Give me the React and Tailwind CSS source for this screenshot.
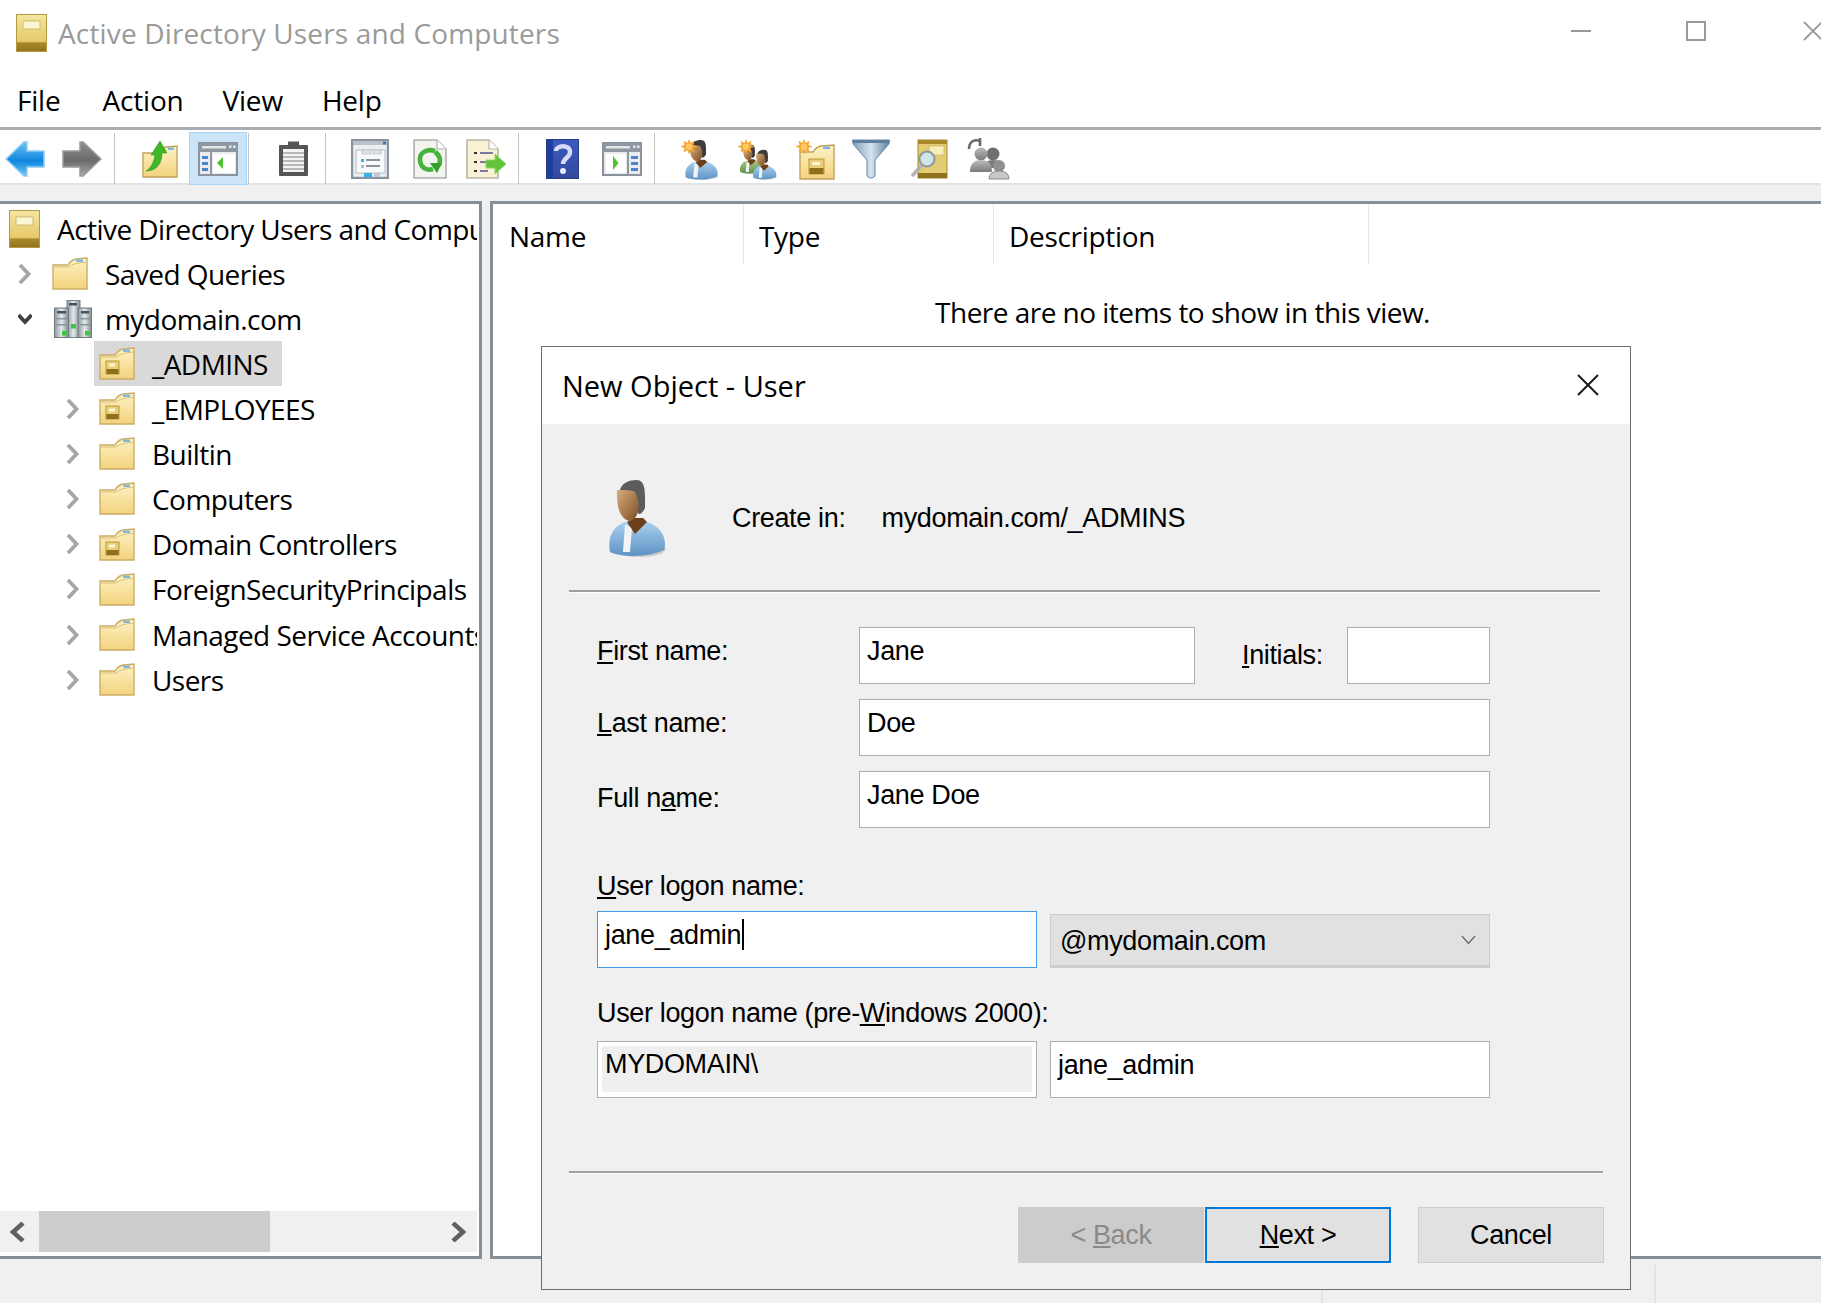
import React from 'react';

const segoe = { fontFamily: '"Open Sans", "Noto Sans", sans-serif' };

// gradients shared by all the little icons
const IconDefs = () => (
  <svg className="absolute w-0 h-0" aria-hidden="true">
    <defs>
      <linearGradient id="folderFill" x1="0" y1="0" x2="0" y2="1">
        <stop offset="0" stopColor="#fdf3c4" />
        <stop offset="1" stopColor="#f3d27e" />
      </linearGradient>
      <linearGradient id="bookFill" x1="0" y1="0" x2="0" y2="1">
        <stop offset="0" stopColor="#f3e6a0" />
        <stop offset="0.75" stopColor="#e5c868" />
        <stop offset="0.76" stopColor="#a98a2a" />
        <stop offset="1" stopColor="#8f7220" />
      </linearGradient>
      <linearGradient id="blueArrow" x1="0" y1="0" x2="0" y2="1">
        <stop offset="0" stopColor="#6cc2f6" />
        <stop offset="0.55" stopColor="#0f86de" />
        <stop offset="1" stopColor="#6cc6f8" />
      </linearGradient>
      <linearGradient id="grayArrow" x1="0" y1="0" x2="0" y2="1">
        <stop offset="0" stopColor="#8e8e8e" />
        <stop offset="0.55" stopColor="#6b6b6b" />
        <stop offset="1" stopColor="#a8a8a8" />
      </linearGradient>
      <linearGradient id="jacket" x1="0" y1="0" x2="0" y2="1">
        <stop offset="0" stopColor="#a9cfee" />
        <stop offset="1" stopColor="#5f93c4" />
      </linearGradient>
      <linearGradient id="jacketGreen" x1="0" y1="0" x2="0" y2="1">
        <stop offset="0" stopColor="#a5c98a" />
        <stop offset="1" stopColor="#5f8f45" />
      </linearGradient>
      <linearGradient id="face" x1="0" y1="0" x2="1" y2="1">
        <stop offset="0" stopColor="#d9ad80" />
        <stop offset="1" stopColor="#7c4d22" />
      </linearGradient>
      <linearGradient id="helpFill" x1="0" y1="0" x2="0" y2="1">
        <stop offset="0" stopColor="#3a5cc0" />
        <stop offset="1" stopColor="#33489c" />
      </linearGradient>
      <linearGradient id="funnel" x1="0" y1="0" x2="1" y2="0">
        <stop offset="0" stopColor="#7f9db8" />
        <stop offset="0.5" stopColor="#d4e4f0" />
        <stop offset="1" stopColor="#5f7f9c" />
      </linearGradient>
      <linearGradient id="server" x1="0" y1="0" x2="1" y2="0">
        <stop offset="0" stopColor="#8c979c" />
        <stop offset="0.5" stopColor="#e3e8ea" />
        <stop offset="1" stopColor="#7f8b90" />
      </linearGradient>
      <linearGradient id="disabledBall" x1="0" y1="0" x2="0" y2="1">
        <stop offset="0" stopColor="#bdbdbd" />
        <stop offset="1" stopColor="#7a7a7a" />
      </linearGradient>
    </defs>
  </svg>
);

const BookIcon = ({ className }) => (
  <svg className={className} viewBox="0 0 31 38">
    <rect x="0.5" y="0.5" width="30" height="37" fill="url(#bookFill)" stroke="#b59a45" />
    <rect x="7" y="7" width="17" height="8" fill="#fbf6d4" stroke="#c9b15e" strokeWidth="0.8" />
  </svg>
);

const FolderIcon = ({ ou }) => (
  <svg className="w-[36px] h-[33px] shrink-0 blur-[0.4px]" viewBox="0 0 36 33">
    <path d="M1 8 L16 8 Q19 3 24 2 L35 1 L35 32 L1 32 Z" fill="url(#folderFill)" stroke="#cbae66" strokeWidth="1.4" />
    <path d="M1 10 L17 10 Q21 6 35 5" fill="none" stroke="#d9bf7c" strokeWidth="1" />
    <rect x="24" y="2.5" width="7" height="2.4" fill="#7cb4e6" />
    {ou && (
      <g>
        <rect x="7" y="14" width="13" height="13" fill="#e9cf78" stroke="#a98a2a" strokeWidth="0.8" />
        <rect x="7.5" y="22" width="12" height="5" fill="#8f6f1c" />
        <rect x="10" y="16.5" width="6" height="3" fill="#fbf6d4" />
      </g>
    )}
  </svg>
);

const DomainIcon = () => (
  <svg className="w-[38px] h-[38px] shrink-0 blur-[0.4px]" viewBox="0 0 38 38">
    <rect x="13" y="0.5" width="13" height="37" fill="url(#server)" stroke="#7a868c" />
    <rect x="15" y="3" width="8" height="2.5" fill="#45545c" />
    <rect x="0.5" y="8" width="14" height="29.5" fill="url(#server)" stroke="#6f7b80" />
    <rect x="24" y="8" width="13.5" height="29.5" fill="url(#server)" stroke="#6f7b80" />
    <rect x="3" y="11" width="9" height="2.5" fill="#45545c" />
    <rect x="27" y="11" width="8" height="2.5" fill="#45545c" />
    <rect x="2" y="18" width="11" height="1.5" fill="#8a969b" />
    <rect x="26" y="18" width="10" height="1.5" fill="#8a969b" />
    <rect x="2" y="24" width="11" height="1.5" fill="#8a969b" />
    <rect x="26" y="24" width="10" height="1.5" fill="#8a969b" />
    <rect x="8" y="31" width="5" height="4.5" fill="#3fc53f" />
    <rect x="31" y="31" width="5" height="4.5" fill="#3fc53f" />
    <rect x="17" y="24" width="5" height="4.5" fill="#3fc53f" />
  </svg>
);

const Chevron = ({ open, className = '' }) => (
  <svg className={`w-[14px] h-[20px] shrink-0 ${className}`} viewBox="0 0 14 20">
    {open ? (
      <path d="M0.5 6 L7 13 L13.5 6" fill="none" stroke="#404040" strokeWidth="3.8" />
    ) : (
      <path d="M2 1 L10.5 10 L2 19" fill="none" stroke="#a6a6a6" strokeWidth="3.8" />
    )}
  </svg>
);

const Person = ({ className }) => (
  <svg className={className} viewBox="0 0 60 80">
    <Person2 hair="#5c5c5c" />
  </svg>
);

// person drawing, usable nested in another svg
function Person2({ fill = 'url(#jacket)', hair = '#3d3d3d' }) {
  return (
    <g>
      <ellipse cx="33" cy="71" rx="26" ry="8" fill="#000" opacity="0.14" />
      <path d="M3 74 C0 58 7 48 18 44 L28 46 L40 44 C53 48 61 60 57 72 C44 79 16 80 3 74 Z" fill={fill} />
      <path d="M18 46 L25 50 L23 74 L16 74 Z" fill="#f0f4f6" />
      <path d="M20 44 L27 40 L36 40 L40 44 L28 56 Z" fill="#6b3f18" />
      <path d="M12 18 C12 6 20 2 30 2 C39 3 38 14 38 30 C36 34 34 36 32 36 Z" fill={hair} />
      <path d="M10 12 C18 12 26 12 28 14 C34 26 32 40 24 43 C16 43 9 34 10 12 Z" fill="url(#face)" />
    </g>
  );
}

const Star = () => (
  <g>
    <path d="M9 1 L10.6 5 L14.5 2.8 L13.4 7 L17.5 8.5 L13.4 10.3 L14.5 14.5 L10.6 12.2 L9 16.5 L7.4 12.2 L3.5 14.5 L4.6 10.3 L0.5 8.5 L4.6 7 L3.5 2.8 L7.4 5 Z" fill="#f7a52b" />
    <circle cx="9" cy="8.7" r="3.2" fill="#fdc868" />
  </g>
);

const PaneIcon = ({ flip }) => (
  <svg className="w-[40px] h-[34px] shrink-0" viewBox="0 0 40 34">
    <rect x="1" y="1" width="38" height="32" fill="#e9ebee" stroke="#8a929c" strokeWidth="2" />
    <rect x="1" y="1" width="38" height="9" fill="#8f98a2" />
    <rect x="4" y="4" width="24" height="2.5" fill="#e4e7ea" />
    <rect x="31" y="3.5" width="2.5" height="2.5" fill="#e4e7ea" />
    <rect x="35" y="3.5" width="2.5" height="2.5" fill="#e4e7ea" />
    {flip ? (
      <g>
        <rect x="4" y="12" width="20" height="19" fill="#fff" />
        <rect x="25" y="10" width="2" height="23" fill="#8f98a2" />
        <path d="M11 14 L16.5 21 L11 28 Z" fill="#4fc22f" />
        <rect x="29" y="14" width="7" height="3" fill="#4a86c8" />
        <rect x="29" y="20" width="7" height="3" fill="#4a86c8" />
        <rect x="29" y="26" width="7" height="3" fill="#4a86c8" />
      </g>
    ) : (
      <g>
        <rect x="15" y="12" width="22" height="19" fill="#fff" />
        <rect x="12" y="10" width="2" height="23" fill="#8f98a2" />
        <path d="M25 15 L19 21 L25 27 Z" fill="#4fc22f" />
        <rect x="4" y="14" width="6" height="3" fill="#4a86c8" />
        <rect x="4" y="20" width="6" height="3" fill="#4a86c8" />
        <rect x="4" y="26" width="6" height="3" fill="#4a86c8" />
      </g>
    )}
  </svg>
);

const ToolSep = ({ className = '' }) => <div className={`w-px h-[51px] bg-[#c4c4c4] shrink-0 ${className}`} />;

const Toolbar = () => (
  <div className="h-[58px] bg-white border-t-[3px] border-t-[#a9adb1] border-b-2 border-b-[#e2e2e2] flex items-center shrink-0 pt-[4px] [&_svg]:blur-[0.5px]">
    {/* back / forward */}
    <svg className="w-[40px] h-[36px] shrink-0 ml-[5px]" viewBox="0 0 40 36">
      <path d="M1 18 L19 1 L22 1 L22 10 L39 10 L39 26 L22 26 L22 35 L19 35 Z" fill="url(#blueArrow)" stroke="#8fcdf5" strokeWidth="1.5" />
    </svg>
    <svg className="w-[40px] h-[36px] shrink-0 ml-[17px]" viewBox="0 0 40 36">
      <path d="M39 18 L21 1 L18 1 L18 10 L1 10 L1 26 L18 26 L18 35 L21 35 Z" fill="url(#grayArrow)" stroke="#9a9a9a" strokeWidth="1.5" />
    </svg>
    <ToolSep className="ml-[12px]" />
    {/* up one level */}
    <svg className="w-[36px] h-[38px] shrink-0 ml-[27px]" viewBox="0 0 36 38">
      <path d="M1 13 L14 13 Q18 8 24 7 L35 6 L35 37 L1 37 Z" fill="url(#folderFill)" stroke="#c2a35c" strokeWidth="1.4" />
      <rect x="26" y="7.5" width="6" height="2.4" fill="#7cb4e6" />
      <path d="M4 31 C9 28 12 22 13 15 L9 15 L18 1 L25 13 L20 13 C20 23 15 31 4 31 Z" fill="#3fb52a" stroke="#2c9a1e" strokeWidth="0.6" />
    </svg>
    {/* show/hide console tree, pressed */}
    <div className="w-[58px] h-[53px] bg-[#cce4f7] border border-[#a8d4f5] flex items-center justify-center shrink-0 ml-[11px]">
      <PaneIcon />
    </div>
    <ToolSep className="ml-px" />
    {/* clipboard */}
    <svg className="w-[31px] h-[36px] shrink-0 ml-[29px]" viewBox="0 0 31 36">
      <rect x="1" y="4" width="29" height="31" fill="#565656" rx="1" />
      <rect x="10" y="0.5" width="11" height="5" fill="#565656" />
      <rect x="5" y="8" width="21" height="23" fill="#f4f4f4" />
      <path d="M5 12 H26 M5 16 H26 M5 20 H26 M5 24 H26 M5 28 H26" stroke="#a4a4a4" strokeWidth="1.4" />
    </svg>
    <ToolSep className="ml-[16px]" />
    {/* properties */}
    <svg className="w-[38px] h-[40px] shrink-0 ml-[25px]" viewBox="0 0 38 40">
      <rect x="1" y="1" width="36" height="38" fill="#eceff2" stroke="#8a929c" strokeWidth="2.4" />
      <rect x="2" y="2" width="34" height="4" fill="#b9c0c8" />
      <rect x="32" y="2.5" width="3" height="3" fill="#4a78b8" />
      <rect x="5" y="11" width="29" height="23" fill="#f8f9fb" stroke="#b6bcc4" />
      <rect x="11" y="11" width="9" height="4" fill="#dfe3e8" stroke="#aeb5bd" strokeWidth="0.6" />
      <rect x="22" y="11" width="8" height="4" fill="#dfe3e8" stroke="#aeb5bd" strokeWidth="0.6" />
      <rect x="10" y="20" width="3" height="3" fill="#30b2ec" />
      <rect x="10" y="26" width="3" height="3" fill="#b4bac2" />
      <path d="M15 21 H29 M15 27 H29" stroke="#8a929c" strokeWidth="2" />
      <rect x="13" y="34" width="8" height="4" fill="#30b2ec" />
      <rect x="23" y="34" width="6" height="4" fill="#c4c9d0" />
    </svg>
    {/* refresh */}
    <svg className="w-[34px] h-[40px] shrink-0 ml-[24px]" viewBox="0 0 34 40">
      <path d="M1 1 H24 L33 10 V39 H1 Z" fill="#f3f3f0" stroke="#b0b0ac" strokeWidth="1.6" />
      <path d="M24 1 V10 H33" fill="#fff" stroke="#b0b0ac" strokeWidth="1.2" />
      <path d="M22 12 C12 9 6 15 7 22 C8 29 14 32 20 30" fill="none" stroke="#45b339" strokeWidth="4.6" />
      <path d="M22 13 C28 17 28 23 25 27" fill="none" stroke="#45b339" strokeWidth="4.6" />
      <path d="M17 24 L29 24 L24 34 Z" fill="#2f9f2a" />
    </svg>
    {/* export list */}
    <svg className="w-[41px] h-[40px] shrink-0 ml-[19px]" viewBox="0 0 41 40">
      <path d="M1 1 H23 L32 10 V39 H1 Z" fill="#f8f1d4" stroke="#b8b6a6" strokeWidth="1.6" />
      <path d="M23 1 V10 H32" fill="#fff" stroke="#b8b6a6" strokeWidth="1.2" />
      <path d="M8 14 h3 M8 23 h3 M8 32 h3" stroke="#333" strokeWidth="2" />
      <path d="M14 14 H27 M14 23 H22 M14 32 H22" stroke="#7a7aa0" strokeWidth="2" />
      <path d="M20 21 H29 V15 L40 25 L29 35 V29 H20 Z" fill="#62c33a" stroke="#8ed86c" strokeWidth="1" />
    </svg>
    <ToolSep className="ml-[11px]" />
    {/* help */}
    <svg className="w-[33px] h-[40px] shrink-0 ml-[27px]" viewBox="0 0 33 40">
      <rect x="0.5" y="0.5" width="32" height="39" fill="url(#helpFill)" stroke="#2a3c86" />
      <path d="M1 1 L7 1 L7 39 L1 39 Z" fill="#1f3f9e" />
      <path d="M10 12 C10 6 24 5 24 13 C24 19 17 19 17 25" fill="none" stroke="#d8dcf6" strokeWidth="4.4" />
      <circle cx="17" cy="32" r="3" fill="#e6e9fa" />
    </svg>
    <div className="ml-[23px]"><PaneIcon flip /></div>
    <ToolSep className="ml-[12px]" />
    {/* new user */}
    <svg className="w-[38px] h-[42px] shrink-0 ml-[25px]" viewBox="0 0 38 42">
      <g transform="translate(4 1) scale(0.58 0.52)"><Person2 /></g>
      <Star />
    </svg>
    {/* new group */}
    <svg className="w-[40px] h-[42px] shrink-0 ml-[19px]" viewBox="0 0 40 42">
      <g transform="translate(2 6) scale(0.42 0.38)"><Person2 fill="url(#jacketGreen)" /></g>
      <g transform="translate(15 11) scale(0.42 0.39)"><Person2 /></g>
      <Star />
    </svg>
    {/* new OU */}
    <svg className="w-[40px] h-[42px] shrink-0 ml-[18px]" viewBox="0 0 40 42">
      <path d="M5 14 L18 14 Q21 9 26 8 L39 7 L39 41 L5 41 Z" fill="url(#folderFill)" stroke="#c2a35c" strokeWidth="1.4" />
      <rect x="28" y="8.5" width="7" height="2.6" fill="#7cb4e6" />
      <rect x="14" y="21" width="15" height="15" fill="#e9cf78" stroke="#a98a2a" strokeWidth="0.8" />
      <rect x="14.5" y="30" width="14" height="6" fill="#8f6f1c" />
      <rect x="17" y="24" width="8" height="3" fill="#fbf6d4" />
      <Star />
    </svg>
    {/* filter */}
    <svg className="w-[38px] h-[40px] shrink-0 ml-[17px]" viewBox="0 0 38 40">
      <path d="M0.5 1 H37.5 L37 5 L23 21 V37 Q19 41 15 37 V21 L1 5 Z" fill="url(#funnel)" stroke="#6c8aa6" />
      <rect x="1" y="1" width="36" height="3" fill="#5d7f9e" />
    </svg>
    {/* find */}
    <svg className="w-[38px] h-[40px] shrink-0 ml-[20px]" viewBox="0 0 38 40">
      <rect x="8" y="1" width="29" height="38" fill="#e3cd74" stroke="#a98a2a" />
      <rect x="8" y="1" width="29" height="4" fill="#a98a2a" />
      <rect x="8" y="34" width="29" height="5" fill="#8f7220" />
      <rect x="19" y="7" width="15" height="9" fill="#f7efb8" stroke="#c9b15e" strokeWidth="0.7" />
      <circle cx="17" cy="20" r="7.5" fill="#cfe4e6" stroke="#8d989c" strokeWidth="2" />
      <path d="M12 26 L2 37" stroke="#b2b2b2" strokeWidth="3.5" />
    </svg>
    {/* connect to domain, disabled */}
    <svg className="w-[43px] h-[42px] shrink-0 ml-[19px]" viewBox="0 0 43 42">
      <path d="M2 11 C2 3 8 1 13 3" fill="none" stroke="#6a6a6a" strokeWidth="2.6" />
      <path d="M13 0 V8" stroke="#6a6a6a" strokeWidth="2.6" />
      <circle cx="26" cy="16" r="6.5" fill="#6f6f6f" />
      <path d="M17 30 Q17 22 26 22 Q36 22 36 30 Z" fill="#7d7d7d" />
      <circle cx="14" cy="16" r="6.5" fill="url(#disabledBall)" />
      <path d="M3 34 Q3 22 14 22 Q25 22 25 34 Z" fill="url(#disabledBall)" />
      <circle cx="32" cy="28" r="6" fill="#8f8f8f" />
      <path d="M22 41 Q22 33 32 33 Q42 33 42 41 Z" fill="#c8c8c8" stroke="#8a8a8a" />
    </svg>
  </div>
);

const treeItems = [
  { label: '_EMPLOYEES', ou: true },
  { label: 'Builtin' },
  { label: 'Computers' },
  { label: 'Domain Controllers', ou: true },
  { label: 'ForeignSecurityPrincipals' },
  { label: 'Managed Service Accounts' },
  { label: 'Users' },
];

const Tree = () => (
  <div className="flex-1 min-h-0 overflow-hidden text-[28px] tracking-[-0.55px] text-black whitespace-nowrap mr-[2px]" style={segoe}>
    <div className="pt-[2px]">
      <div className="h-[45px] flex items-center pl-[9px]">
        <BookIcon className="w-[31px] h-[38px] shrink-0 blur-[0.4px]" />
        <span className="ml-[17px]">Active Directory Users and Computers</span>
      </div>
      <div className="h-[45px] flex items-center pl-[18px]">
        <Chevron />
        <span className="ml-[20px]"><FolderIcon /></span>
        <span className="ml-[17px]">Saved Queries</span>
      </div>
      <div className="h-[45px] flex items-center pl-[18px]">
        <Chevron open />
        <span className="ml-[22px]"><DomainIcon /></span>
        <span className="ml-[13px]">mydomain.com</span>
      </div>
      <div className="h-[45px] flex items-center pl-[94px]">
        <div className="h-[45px] w-[188px] bg-[#d9d9d9] flex items-center pl-[5px]">
          <FolderIcon ou />
          <span className="ml-[17px]">_ADMINS</span>
        </div>
      </div>
      {treeItems.map((item) => (
        <div key={item.label} className="h-[45.2px] flex items-center pl-[66px]">
          <Chevron />
          <span className="ml-[19px]"><FolderIcon ou={item.ou} /></span>
          <span className="ml-[17px]">{item.label}</span>
        </div>
      ))}
    </div>
  </div>
);

const ScrollBar = () => (
  <div className="h-[41px] bg-[#f0f0f0] flex items-center shrink-0 mb-[4px] mr-[2px]">
    <svg className="w-[17px] h-[20px] ml-[8px] shrink-0" viewBox="0 0 17 20">
      <path d="M15 1 L5 10 L15 19" fill="none" stroke="#606060" strokeWidth="4.5" />
    </svg>
    <div className="h-full w-[231px] bg-[#cdcdcd] ml-[14px] shrink-0" />
    <svg className="w-[17px] h-[20px] ml-auto mr-[9px] shrink-0" viewBox="0 0 17 20">
      <path d="M2 1 L12 10 L2 19" fill="none" stroke="#606060" strokeWidth="4.5" />
    </svg>
  </div>
);

const Field = ({ className = '', children }) => (
  <div className={`h-[57px] bg-white border border-[#aeaeae] pl-[7px] pt-[5px] text-[27px] leading-[36px] shrink-0 ${className}`}>
    {children}
  </div>
);

const Btn = ({ className = '', children }) => (
  <div className={`h-[56px] w-[186px] flex items-center justify-center text-[27px] ${className}`}>{children}</div>
);

const Sep = ({ className = '' }) => <div className={`h-[3px] bg-[#a0a0a0] border-b border-b-white ${className}`} />;

const Dialog = () => (
  <div className="absolute left-[541px] top-[346px] w-[1090px] h-[944px] border border-[#6e6e6e] bg-[#f0f0f0] flex flex-col">
    <div className="h-[77px] bg-white flex items-center justify-between pl-[20px] pr-[31px] shrink-0">
      <span className="text-[29px] text-black" style={segoe}>New Object - User</span>
      <svg className="w-[22px] h-[22px] -mt-[2px]" viewBox="0 0 22 22">
        <path d="M1 1 L21 21 M21 1 L1 21" stroke="#1a1a1a" strokeWidth="2" />
      </svg>
    </div>
    <div className="flex-1 flex flex-col font-['Liberation_Sans',Arial,sans-serif] text-[27px] text-black tracking-[-0.35px]">
      <div className="h-[166px] flex items-center pl-[65px] pt-[22px] shrink-0">
        <Person className="w-[60px] h-[80px] shrink-0 blur-[0.4px]" />
        <span className="ml-[65px]">Create in:</span>
        <span className="ml-[36px]">mydomain.com/_ADMINS</span>
      </div>
      <Sep className="ml-[27px] mr-[30px]" />
      <div className="pl-[55px] w-[948px] pt-[34px]">
        <div className="flex">
          <div className="w-[262px] shrink-0 leading-[48px]"><u>F</u>irst name:</div>
          <Field className="w-[336px]">Jane</Field>
          <div className="w-[152px] pl-[47px] shrink-0 leading-[56px] whitespace-nowrap"><u>I</u>nitials:</div>
          <Field className="flex-1" />
        </div>
        <div className="flex mt-[15px]">
          <div className="w-[262px] shrink-0 leading-[48px]"><u>L</u>ast name:</div>
          <Field className="flex-1">Doe</Field>
        </div>
        <div className="flex mt-[15px]">
          <div className="w-[262px] shrink-0 leading-[54px]">Full n<u>a</u>me:</div>
          <Field className="flex-1">Jane Doe</Field>
        </div>
        <div className="mt-[36px] leading-[44px]"><u>U</u>ser logon name:</div>
        <div className="flex gap-[13px] items-center mt-[3px]">
          <Field className="w-[440px] !border-[#3f9be8] flex items-start">
            jane_admin<span className="inline-block w-[2px] h-[31px] bg-black ml-px mt-[2px]" />
          </Field>
          <div className="h-[54px] mt-[2px] flex-1 bg-[#e1e1e1] border border-[#cdcdcd] border-b-[3px] flex items-center pl-[9px] pr-[13px] justify-between">
            <span className="pt-[3px]">@mydomain.com</span>
            <svg className="w-[15px] h-[10px]" viewBox="0 0 15 10">
              <path d="M1 1 L7.5 8.5 L14 1" fill="none" stroke="#6a6a6a" strokeWidth="1.3" />
            </svg>
          </div>
        </div>
        <div className="mt-[23px] leading-[44px]">User logon name (pre-<u>W</u>indows 2000):</div>
        <div className="flex gap-[13px] mt-[6px]">
          <Field className="w-[440px] !pl-0 !pt-0">
            <div className="ml-[4px] mt-[4px] mr-[4px] h-[46px] bg-[#efefef] pl-[3px] leading-[36px]">MYDOMAIN\</div>
          </Field>
          <Field className="flex-1">jane_admin</Field>
        </div>
      </div>
      <Sep className="ml-[27px] mr-[27px] mt-[73px]" />
      <div className="flex justify-end pr-[26px] mt-[33px]">
        <Btn className="bg-[#cccccc] text-[#8a8a8a]">&lt; <u className="ml-[7px]">B</u>ack</Btn>
        <Btn className="bg-[#e1e1e1] border-2 border-[#0078d7] ml-px"><u>N</u>ext &gt;</Btn>
        <Btn className="bg-[#e1e1e1] border border-[#cdcdcd] ml-[27px]">Cancel</Btn>
      </div>
    </div>
  </div>
);

export default function App() {
  return (
    <div className="relative w-[1821px] h-[1303px] bg-[#f0f0f0] overflow-hidden flex flex-col">
      <IconDefs />
      {/* window title */}
      <div className="h-[66px] bg-white flex items-center shrink-0 overflow-hidden">
        <BookIcon className="w-[31px] h-[38px] ml-[16px] shrink-0 blur-[0.4px]" />
        <span className="ml-[11px] text-[28px] tracking-[0.15px] text-[#9a9a9a] pb-[1px]" style={segoe}>Active Directory Users and Computers</span>
        <svg className="w-[20px] h-[4px] ml-auto shrink-0 -mt-[4px]" viewBox="0 0 20 4"><rect y="1" width="20" height="2" fill="#999" /></svg>
        <svg className="w-[20px] h-[20px] ml-[95px] shrink-0 -mt-[4px]" viewBox="0 0 20 20"><rect x="1" y="1" width="18" height="18" fill="none" stroke="#999" strokeWidth="2" /></svg>
        <svg className="w-[20px] h-[20px] ml-[97px] -mr-[2px] shrink-0 -mt-[4px]" viewBox="0 0 20 20"><path d="M1 1 L19 19 M19 1 L1 19" stroke="#999" strokeWidth="1.8" /></svg>
      </div>
      {/* menu */}
      <div className="h-[62px] bg-white flex items-center shrink-0 text-[28px] tracking-[-0.2px] text-black pl-[17px] pt-[8px] -mt-px" style={segoe}>
        <span>File</span>
        <span className="ml-[42px]">Action</span>
        <span className="ml-[39px]">View</span>
        <span className="ml-[39px]">Help</span>
      </div>
      <Toolbar />
      {/* panes */}
      <div className="flex flex-1 min-h-0 pt-[16px]">
        <div className="w-[482px] shrink-0 h-[1058px] bg-white border-t-[3px] border-r-[3px] border-b-[3px] border-[#868e96] flex flex-col overflow-hidden">
          <Tree />
          <ScrollBar />
        </div>
        <div className="ml-[8px] flex-1 h-[1058px] bg-white border-t-[3px] border-l-[3px] border-b-[3px] border-[#868e96]">
          <div className="h-[60px] flex text-[28px] tracking-[-0.3px] text-black" style={segoe}>
            <div className="w-[251px] pl-[16px] pt-[11px] border-r border-[#e8e8e8]">Name</div>
            <div className="w-[250px] pl-[15px] pt-[11px] border-r border-[#e8e8e8]">Type</div>
            <div className="w-[375px] pl-[15px] pt-[11px] border-r border-[#e8e8e8]">Description</div>
          </div>
          <div className="w-[1379px] text-center text-[28px] tracking-[-0.53px] text-black mt-[27px]" style={segoe}>There are no items to show in this view.</div>
        </div>
      </div>
      {/* status bar dividers */}
      <div className="absolute left-[1321px] bottom-0 w-[2px] h-[38px] bg-[#e4e4e4]" />
      <div className="absolute right-0 bottom-0 w-[167px] h-[38px] border-l-2 border-[#e4e4e4]" />
      <Dialog />
    </div>
  );
}
